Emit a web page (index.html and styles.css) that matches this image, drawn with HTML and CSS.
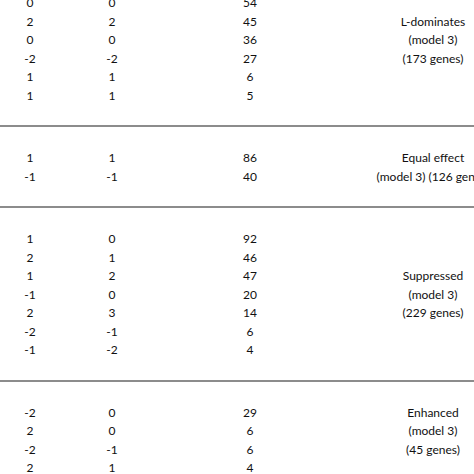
FILE: index.html
```html
<!DOCTYPE html>
<html>
<head>
<meta charset="utf-8">
<link rel="stylesheet" href="styles.css">
</head>
<body>
<div class="tbl">
  <section class="grp first">
    <div class="row"><span>0</span><span>0</span><span>54</span><span></span></div>
    <div class="row"><span>2</span><span>2</span><span>45</span><span>L-dominates</span></div>
    <div class="row"><span>0</span><span>0</span><span>36</span><span>(model 3)</span></div>
    <div class="row"><span>-2</span><span>-2</span><span>27</span><span>(173 genes)</span></div>
    <div class="row"><span>1</span><span>1</span><span>6</span><span></span></div>
    <div class="row"><span>1</span><span>1</span><span>5</span><span></span></div>
  </section>
  <section class="grp">
    <div class="row"><span>1</span><span>1</span><span>86</span><span>Equal effect</span></div>
    <div class="row"><span>-1</span><span>-1</span><span>40</span><span>(model 3) (126 genes)</span></div>
  </section>
  <section class="grp">
    <div class="row"><span>1</span><span>0</span><span>92</span><span></span></div>
    <div class="row"><span>2</span><span>1</span><span>46</span><span></span></div>
    <div class="row"><span>1</span><span>2</span><span>47</span><span>Suppressed</span></div>
    <div class="row"><span>-1</span><span>0</span><span>20</span><span>(model 3)</span></div>
    <div class="row"><span>2</span><span>3</span><span>14</span><span>(229 genes)</span></div>
    <div class="row"><span>-2</span><span>-1</span><span>6</span><span></span></div>
    <div class="row"><span>-1</span><span>-2</span><span>4</span><span></span></div>
  </section>
  <section class="grp last">
    <div class="row"><span>-2</span><span>0</span><span>29</span><span>Enhanced</span></div>
    <div class="row"><span>2</span><span>0</span><span>6</span><span>(model 3)</span></div>
    <div class="row"><span>-2</span><span>-1</span><span>6</span><span>(45 genes)</span></div>
    <div class="row"><span>2</span><span>1</span><span>4</span><span></span></div>
  </section>
</div>
</body>
</html>
```

FILE: styles.css
```css
html, body {
  margin: 0;
  padding: 0;
  background: #ffffff;
  overflow: hidden;
}

body {
  width: 474px;
  height: 474px;
  font-family: "Lato", "Open Sans", sans-serif;
  font-size: 12px;
  color: #111111;
}

.tbl {
  display: flex;
  flex-direction: column;
  width: 530px;
  margin-top: -6px;
}

.grp {
  padding: 22px 0 20px 0;
  border-bottom: 2px solid #8c8c8c;
}

.grp.first {
  padding-top: 0;
}

.grp.last {
  border-bottom: none;
}

.row {
  display: grid;
  grid-template-columns: 60px 104px 172px 194px;
  height: 18.5px;
  line-height: 18.5px;
}

.row span {
  text-align: center;
  white-space: nowrap;
}
```
